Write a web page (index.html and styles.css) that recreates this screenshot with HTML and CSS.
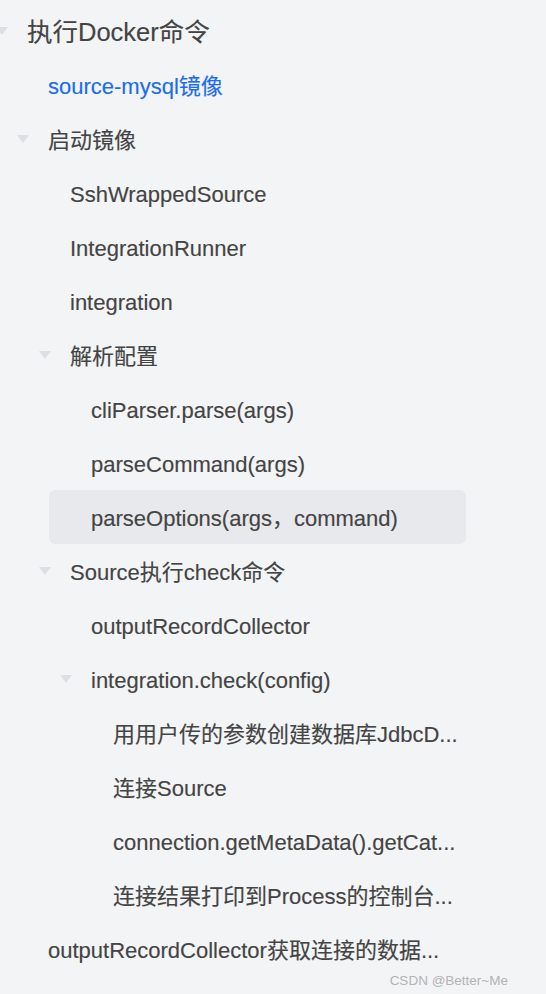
FILE: index.html
```html
<!DOCTYPE html>
<html lang="zh">
<head>
<meta charset="utf-8">
<title>outline</title>
<link rel="stylesheet" href="styles.css">
</head>
<body>
<div class="tree">
  <div class="row l0 title"><span class="tri"></span><span class="txt">执行Docker命令</span></div>
  <div class="row l1"><span class="tri none"></span><span class="txt link">source-mysql镜像</span></div>
  <div class="row l1"><span class="tri"></span><span class="txt">启动镜像</span></div>
  <div class="row l2"><span class="tri none"></span><span class="txt">SshWrappedSource</span></div>
  <div class="row l2"><span class="tri none"></span><span class="txt">IntegrationRunner</span></div>
  <div class="row l2"><span class="tri none"></span><span class="txt">integration</span></div>
  <div class="row l2"><span class="tri"></span><span class="txt">解析配置</span></div>
  <div class="row l3"><span class="tri none"></span><span class="txt">cliParser.parse(args)</span></div>
  <div class="row l3"><span class="tri none"></span><span class="txt">parseCommand(args)</span></div>
  <div class="row l3 active"><span class="tri none"></span><span class="txt">parseOptions(args，command)</span></div>
  <div class="row l2"><span class="tri"></span><span class="txt">Source执行check命令</span></div>
  <div class="row l3"><span class="tri none"></span><span class="txt">outputRecordCollector</span></div>
  <div class="row l3"><span class="tri"></span><span class="txt">integration.check(config)</span></div>
  <div class="row l4"><span class="tri none"></span><span class="txt">用用户传的参数创建数据库JdbcD...</span></div>
  <div class="row l4"><span class="tri none"></span><span class="txt">连接Source</span></div>
  <div class="row l4"><span class="tri none"></span><span class="txt">connection.getMetaData().getCat...</span></div>
  <div class="row l4"><span class="tri none"></span><span class="txt">连接结果打印到Process的控制台...</span></div>
  <div class="row l1"><span class="tri none"></span><span class="txt">outputRecordCollector获取连接的数据...</span></div>
</div>
<div class="watermark">CSDN @Better~Me</div>
</body>
</html>
```
FILE: styles.css
```css
html, body {
  margin: 0;
  padding: 0;
  background: #f3f4f6;
}
body {
  width: 546px;
  height: 994px;
  overflow: hidden;
  position: relative;
  font-family: "Liberation Sans", "Noto Sans CJK SC", Arial, sans-serif;
  color: #444444;
}
.tree {
  padding-top: 4px;
  display: flex;
  flex-direction: column;
}
.row {
  height: 54px;
  display: flex;
  align-items: center;
  font-size: 22px;
  white-space: nowrap;
  box-sizing: border-box;
}
.txt {
  line-height: 24px;
  height: 24px;
  margin-top: 3px;
  display: block;
  -webkit-text-stroke: 0.15px currentColor;
}
.tri {
  flex: none;
  width: 0;
  height: 0;
  border-left: 6.5px solid transparent;
  border-right: 6.5px solid transparent;
  border-top: 8px solid #dcdfe3;
  margin-right: 19px;
}
.tri.none {
  visibility: hidden;
}
.l0 { padding-left: 0; margin-left: -4px; }
.l1 { padding-left: 17px; }
.l2 { padding-left: 39px; }
.l3 { padding-left: 60px; }
.l4 { padding-left: 82px; }
.title {
  font-size: 25.5px;
}
.title .txt {
  line-height: 28px;
  height: 28px;
  margin-top: 2px;
}
.link {
  color: #1a6cf0;
}
.active {
  margin-left: 49px;
  width: 417px;
  padding-left: 11px;
  background: #e7e9ec;
  border-radius: 6px;
}
.watermark {
  position: absolute;
  right: 38px;
  bottom: 6px;
  font-size: 13.5px;
  color: #b3b3b3;
  font-family: "Liberation Sans", Arial, sans-serif;
}
```
